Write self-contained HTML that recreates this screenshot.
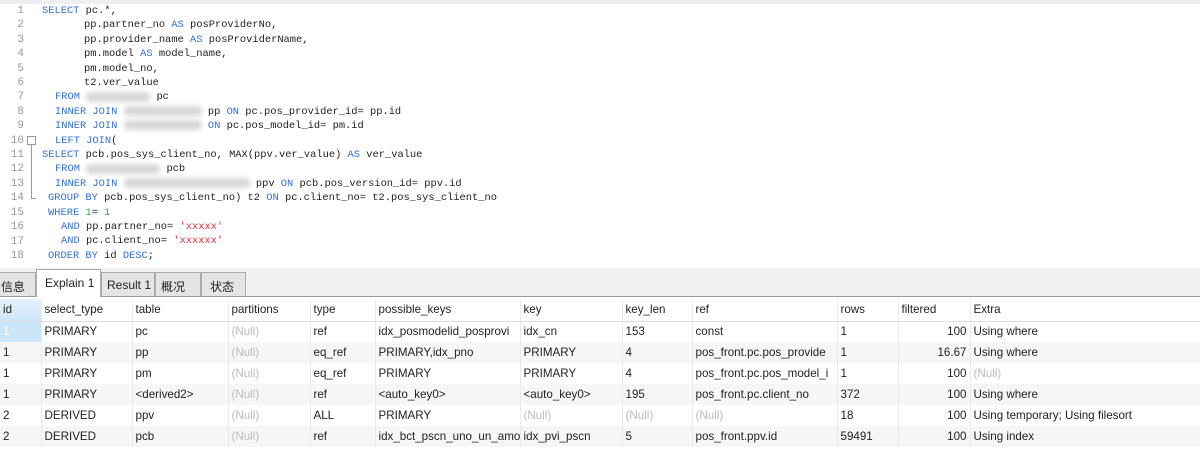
<!DOCTYPE html>
<html><head><meta charset="utf-8"><style>
*{margin:0;padding:0;box-sizing:border-box}
body{width:1200px;height:460px;background:#fff;position:relative;overflow:hidden;font-family:"Liberation Sans","Noto Sans CJK SC",sans-serif}
.top{position:absolute;left:0;top:0;width:1200px;height:4px;background:#efefef}
.ln{position:absolute;left:8px;width:16px;text-align:right;font:11px "Liberation Mono",monospace;color:#999}
.c{position:absolute;font:10.4px "Liberation Mono",monospace;color:#222;white-space:pre;line-height:14px}
.k{color:#2f6fd8}.s{color:#e0303a}.n{color:#2aa84a}
.b{display:inline-block;height:10px;vertical-align:middle;background:#d8d8d8;filter:blur(2.5px);border-radius:4px}
.fold{position:absolute;left:27px;width:9px;height:9px;border:1px solid #999;background:#fff}
.vl{position:absolute;left:31px;border-left:1px solid #999}
.tabbar{position:absolute;left:0;top:268px;width:1200px;height:29px;background:#f0f0f0;border-bottom:1px solid #9a9a9a}
.tab{position:absolute;top:4px;height:24px;border:1px solid #aaa;border-bottom:none;background:#e4e4e4;font-size:12px;color:#222;padding:5px 0 0 5px}
.tab.a{background:#fff;top:1px;height:28px;padding-top:6px}
table{position:absolute;left:0;top:299px;width:1200px;table-layout:fixed;border-collapse:collapse;font-size:11.6px;color:#222}
td{height:21px;padding:0 3px;white-space:nowrap;overflow:hidden;border-right:1px solid #eaeaea}
tr.h td{height:22px;border-bottom:1px solid #ddd}
tr:nth-child(odd):not(.h) td{background:#f5f6f8}
.nu{color:#bbb}
.r{text-align:right}
</style></head><body>
<div class="top"></div>
<div class="ln" style="top:4px;line-height:14.4px">1<br>2<br>3<br>4<br>5<br>6<br>7<br>8<br>9<br>10<br>11<br>12<br>13<br>14<br>15<br>16<br>17<br>18</div>
<div class="fold" style="top:136px"></div>
<div class="vl" style="top:145px;height:53px"></div>
<div style="position:absolute;left:31px;top:198px;width:5px;border-top:1px solid #999"></div>
<div class="c" style="left:42px;top:4px"><span class="k">SELECT</span> pc.*,</div>
<div class="c" style="left:84px;top:18.4px">pp.partner_no <span class="k">AS</span> posProviderNo,</div>
<div class="c" style="left:84px;top:32.8px">pp.provider_name <span class="k">AS</span> posProviderName,</div>
<div class="c" style="left:84px;top:47.2px">pm.model <span class="k">AS</span> model_name,</div>
<div class="c" style="left:84px;top:61.6px">pm.model_no,</div>
<div class="c" style="left:84px;top:76px">t2.ver_value</div>
<div class="c" style="left:55px;top:90.4px"><span class="k">FROM</span> <span class="b" style="width:64px"></span> pc</div>
<div class="c" style="left:55px;top:104.8px"><span class="k">INNER JOIN</span> <span class="b" style="width:78px"></span> pp <span class="k">ON</span> pc.pos_provider_id= pp.id</div>
<div class="c" style="left:55px;top:119.2px"><span class="k">INNER JOIN</span> <span class="b" style="width:78px"></span> <span class="k">ON</span> pc.pos_model_id= pm.id</div>
<div class="c" style="left:55px;top:133.6px"><span class="k">LEFT JOIN</span>(</div>
<div class="c" style="left:42px;top:148px"><span class="k">SELECT</span> pcb.pos_sys_client_no, MAX(ppv.ver_value) <span class="k">AS</span> ver_value</div>
<div class="c" style="left:55px;top:162.4px"><span class="k">FROM</span> <span class="b" style="width:74px"></span> pcb</div>
<div class="c" style="left:55px;top:176.8px"><span class="k">INNER JOIN</span> <span class="b" style="width:126px"></span> ppv <span class="k">ON</span> pcb.pos_version_id= ppv.id</div>
<div class="c" style="left:48px;top:191.2px"><span class="k">GROUP BY</span> pcb.pos_sys_client_no) t2 <span class="k">ON</span> pc.client_no= t2.pos_sys_client_no</div>
<div class="c" style="left:48px;top:205.6px"><span class="k">WHERE</span> <span class="n">1</span>= <span class="n">1</span></div>
<div class="c" style="left:61px;top:220px"><span class="k">AND</span> pp.partner_no= <span class="s">'xxxxx'</span></div>
<div class="c" style="left:61px;top:234.4px"><span class="k">AND</span> pc.client_no= <span class="s">'xxxxxx'</span></div>
<div class="c" style="left:48px;top:248.8px"><span class="k">ORDER BY</span> id <span class="k">DESC</span>;</div>

<div class="tabbar">
<div class="tab" style="left:-6px;width:42px;padding-left:6px">信息</div>
<div class="tab a" style="left:36px;width:65px;padding-left:8px">Explain 1</div>
<div class="tab" style="left:101px;width:54px">Result 1</div>
<div class="tab" style="left:155px;width:46px">概况</div>
<div class="tab" style="left:201px;width:45px;padding-left:8px">状态</div>
</div>

<table>
<colgroup><col style="width:41px"><col style="width:91px"><col style="width:96px"><col style="width:82px"><col style="width:65px"><col style="width:145px"><col style="width:102px"><col style="width:70px"><col style="width:145px"><col style="width:61px"><col style="width:72px"><col style="width:230px"></colgroup>
<tr class="h"><td style="background:linear-gradient(#e4f1fb,#cfe6f8)">id</td><td>select_type</td><td>table</td><td>partitions</td><td>type</td><td>possible_keys</td><td>key</td><td>key_len</td><td>ref</td><td>rows</td><td>filtered</td><td>Extra</td></tr>
<tr><td style="background:#cde5f8;color:#fff">1</td><td>PRIMARY</td><td>pc</td><td class="nu">(Null)</td><td>ref</td><td>idx_posmodelid_posprovi</td><td>idx_cn</td><td>153</td><td>const</td><td>1</td><td class="r">100</td><td>Using where</td></tr>
<tr><td>1</td><td>PRIMARY</td><td>pp</td><td class="nu">(Null)</td><td>eq_ref</td><td>PRIMARY,idx_pno</td><td>PRIMARY</td><td>4</td><td>pos_front.pc.pos_provide</td><td>1</td><td class="r">16.67</td><td>Using where</td></tr>
<tr><td>1</td><td>PRIMARY</td><td>pm</td><td class="nu">(Null)</td><td>eq_ref</td><td>PRIMARY</td><td>PRIMARY</td><td>4</td><td>pos_front.pc.pos_model_i</td><td>1</td><td class="r">100</td><td class="nu">(Null)</td></tr>
<tr><td>1</td><td>PRIMARY</td><td>&lt;derived2&gt;</td><td class="nu">(Null)</td><td>ref</td><td>&lt;auto_key0&gt;</td><td>&lt;auto_key0&gt;</td><td>195</td><td>pos_front.pc.client_no</td><td>372</td><td class="r">100</td><td>Using where</td></tr>
<tr><td>2</td><td>DERIVED</td><td>ppv</td><td class="nu">(Null)</td><td>ALL</td><td>PRIMARY</td><td class="nu">(Null)</td><td class="nu">(Null)</td><td class="nu">(Null)</td><td>18</td><td class="r">100</td><td>Using temporary; Using filesort</td></tr>
<tr><td>2</td><td>DERIVED</td><td>pcb</td><td class="nu">(Null)</td><td>ref</td><td>idx_bct_pscn_uno_un_amo</td><td>idx_pvi_pscn</td><td>5</td><td>pos_front.ppv.id</td><td>59491</td><td class="r">100</td><td>Using index</td></tr>
</table>
</body></html>
